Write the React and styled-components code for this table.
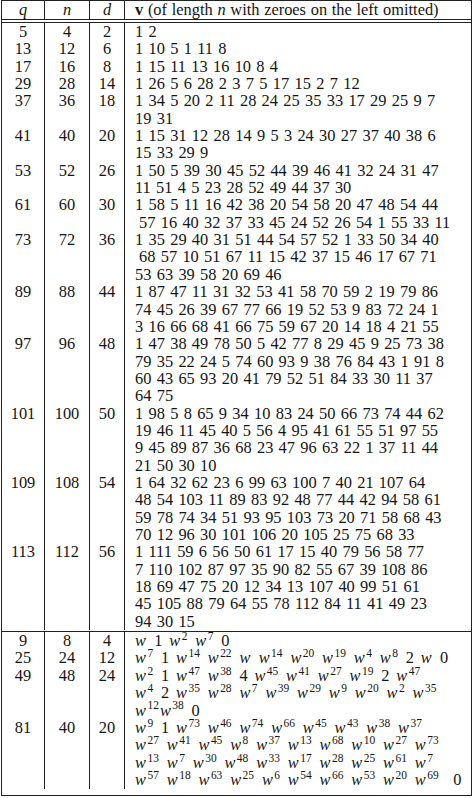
import React from 'react';
import styled, { createGlobalStyle } from 'styled-components';

const Global = createGlobalStyle`
  html, body { margin: 0; padding: 0; background: #fff; }
  body { font-family: "Liberation Serif", "Times New Roman", serif; color: #151515; }
`;

const Table = styled.div`
  width: 471px;
  margin: 0 0 0 1px;
  border: 1px solid #222;
  box-sizing: border-box;
  font-size: 16.4px;
  word-spacing: 1.2px;
`;

const Row = styled.div`
  display: grid;
  grid-template-columns: 43px 45px 35px 1fr;
  line-height: ${(p) => (p.$w ? '17.4px' : '17.35px')};
  word-spacing: ${(p) => (p.$w ? '2.7px' : 'inherit')};
`;

const Head = styled(Row)`
  height: 18px;
  line-height: 18px;
  border-bottom: 1px solid #222;
  margin-bottom: 2px;
  word-spacing: 0.6px;
`;

const Section = styled.div`
  border-top: 1px solid #222;
  padding-bottom: ${(p) => p.$pb || 0}px;
`;

const Cell = styled.div`
  border-right: 1px solid #222;
  text-align: center;
  font-style: ${(p) => (p.$it ? 'italic' : 'normal')};
  word-spacing: 0;
`;

const VCell = styled.div`
  padding-left: 10px;
  white-space: pre;
`;

const Line = styled.div`
  padding-left: ${(p) => (p.$indent ? 4 : 0)}px;
`;

const Bold = styled.b`
  font-weight: bold;
`;

const It = styled.i`
  font-style: italic;
`;

const MathW = styled(It)`
  margin-right: 1.5px;
`;

const Sup = styled.span`
  font-size: 0.7em;
  vertical-align: 0.55em;
  line-height: 0;
  margin-right: 1px;
`;

const plain = [
  ['5', '4', '2', ['1 2']],
  ['13', '12', '6', ['1 10 5 1 11 8']],
  ['17', '16', '8', ['1 15 11 13 16 10 8 4']],
  ['29', '28', '14', ['1 26 5 6 28 2 3 7 5 17 15 2 7 12']],
  ['37', '36', '18', ['1 34 5 20 2 11 28 24 25 35 33 17 29 25 9 7', '19 31']],
  ['41', '40', '20', ['1 15 31 12 28 14 9 5 3 24 30 27 37 40 38 6', '15 33 29 9']],
  ['53', '52', '26', ['1 50 5 39 30 45 52 44 39 46 41 32 24 31 47', '11 51 4 5 23 28 52 49 44 37 30']],
  ['61', '60', '30', ['1 58 5 11 16 42 38 20 54 58 20 47 48 54 44', '>57 16 40 32 37 33 45 24 52 26 54 1 55 33 11']],
  ['73', '72', '36', ['1 35 29 40 31 51 44 54 57 52 1 33 50 34 40', '>68 57 10 51 67 11 15 42 37 15 46 17 67 71', '53 63 39 58 20 69 46']],
  ['89', '88', '44', ['1 87 47 11 31 32 53 41 58 70 59 2 19 79 86', '74 45 26 39 67 77 66 19 52 53 9 83 72 24 1', '3 16 66 68 41 66 75 59 67 20 14 18 4 21 55']],
  ['97', '96', '48', ['1 47 38 49 78 50 5 42 77 8 29 45 9 25 73 38', '79 35 22 24 5 74 60 93 9 38 76 84 43 1 91 8', '60 43 65 93 20 41 79 52 51 84 33 30 11 37', '64 75']],
  ['101', '100', '50', ['1 98 5 8 65 9 34 10 83 24 50 66 73 74 44 62', '19 46 11 45 40 5 56 4 95 41 61 55 51 97 55', '9 45 89 87 36 68 23 47 96 63 22 1 37 11 44', '21 50 30 10']],
  ['109', '108', '54', ['1 64 32 62 23 6 99 63 100 7 40 21 107 64', '48 54 103 11 89 83 92 48 77 44 42 94 58 61', '59 78 74 34 51 93 95 103 73 20 71 58 68 43', '70 12 96 30 101 106 20 105 25 75 68 33']],
  ['113', '112', '56', ['1 111 59 6 56 50 61 17 15 40 79 56 58 77', '7 110 102 87 97 35 90 82 55 67 39 108 86', '18 69 47 75 20 12 34 13 107 40 99 51 61', '45 105 88 79 64 55 78 112 84 11 41 49 23', '94 30 15']],
];

const powers = [
  ['9', '8', '4', ['w 1 w^2 w^7 0']],
  ['25', '24', '12', ['w^7 1 w^14 w^22 w w^14 w^20 w^19 w^4 w^8 2 w 0']],
  ['49', '48', '24', ['w^2 1 w^47 w^38 4 w^45 w^41 w^27 w^19 2 w^47', 'w^4 2 w^35 w^28 w^7 w^39 w^29 w^9 w^20 w^2 w^35', 'w^12w^38 0']],
  ['81', '40', '20', ['w^9 1 w^73 w^46 w^74 w^66 w^45 w^43 w^38 w^37', 'w^27 w^41 w^45 w^8 w^37 w^13 w^68 w^10 w^27 w^73', 'w^13 w^7 w^30 w^48 w^33 w^17 w^28 w^25 w^61 w^7', 'w^57 w^18 w^63 w^25 w^6 w^54 w^66 w^53 w^20 w^69  0']],
];

// turn "w^12 1 w" into italic w with raised exponents
const renderPowers = (text) =>
  text.split(/(w(?:\^\d+)?)/).filter(Boolean).map((part, i) => {
    if (part[0] !== 'w') return part;
    const exp = part.slice(2);
    return (
      <React.Fragment key={i}>
        <MathW>w</MathW>
        {exp && <Sup>{exp}</Sup>}
      </React.Fragment>
    );
  });

const Entries = ({ rows, w }) =>
  rows.map(([q, n, d, lines]) => (
    <Row key={q} $w={w}>
      <Cell>{q}</Cell>
      <Cell>{n}</Cell>
      <Cell>{d}</Cell>
      <VCell>
        {lines.map((l, i) => {
          const indent = l[0] === '>';
          const txt = indent ? l.slice(1) : l;
          return (
            <Line key={i} $indent={indent}>
              {w ? renderPowers(txt) : txt}
            </Line>
          );
        })}
      </VCell>
    </Row>
  ));

const App = () => (
  <>
    <Global />
    <Table>
      <Head>
        <Cell $it>q</Cell>
        <Cell $it>n</Cell>
        <Cell $it>d</Cell>
        <VCell>
          <Bold>v</Bold> (of length <It>n</It> with zeroes on the left omitted)
        </VCell>
      </Head>
      <Section $pb={1}>
        <Entries rows={plain} />
      </Section>
      <Section $pb={6}>
        <Entries rows={powers} w />
      </Section>
    </Table>
  </>
);

export default App;
